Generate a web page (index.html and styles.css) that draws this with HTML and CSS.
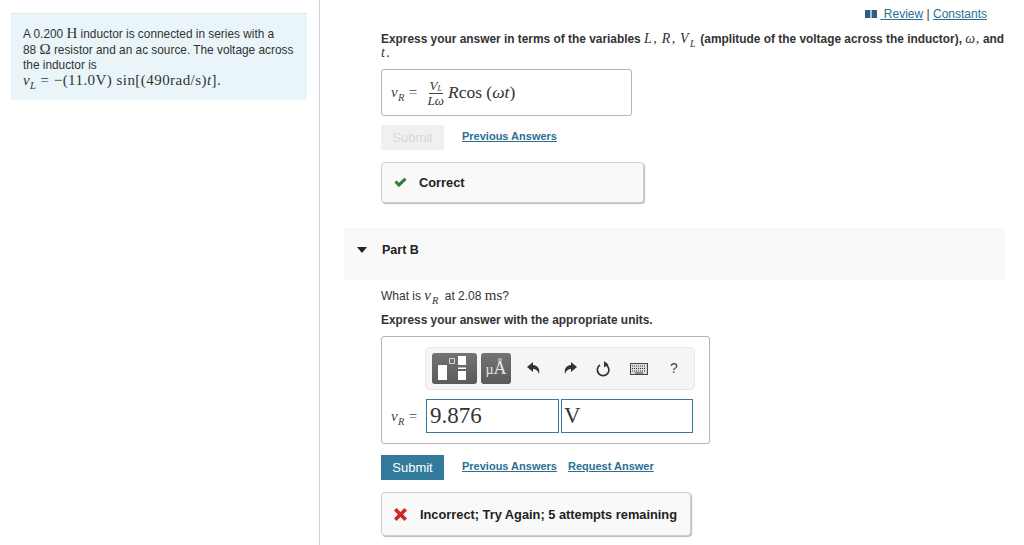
FILE: index.html
```html
<!DOCTYPE html>
<html lang="en">
<head>
  <meta charset="UTF-8" />
  <title>Part B</title>
  <link rel="stylesheet" href="styles.css">
</head>
<body>

  <aside class="sidebar">
    <div class="intro">
      A 0.200 <span class="unit">H</span> inductor is connected in series with a<br>
      88 <span class="unit">Ω</span> resistor and an ac source. The voltage across<br>
      the inductor is
      <div class="formula"><i>v<sub>L</sub></i> = −(11.0V) sin[(490rad/s)<i>t</i>].</div>
    </div>
  </aside>

  <main class="content">
    <div class="toplinks">
      <svg class="book" width="12" height="8" viewBox="0 0 12 8"><path d="M0 0h5.400v8H0zM6.600 0H12v8H6.600z"/></svg>
      <a href="#">&nbsp;Review</a> | <a href="#">Constants</a>
    </div>

    <section class="part">
      <p class="hint">Express your answer in terms of the variables <span class="var">L,</span> <span class="var">R,</span> <span class="var">V<sub>L</sub></span> (amplitude of the voltage across the inductor), <span class="var var-tight">ω,</span> and<br><span class="var">t.</span></p>

      <div class="answer answer-done">
        <span class="lhs"><i>v<sub>R</sub></i> =</span>
        <span class="frac"><span class="num"><i>V<sub>L</sub></i></span><span class="den"><i>Lω</i></span></span>
        <span class="expr"><i>R</i>cos (<i>ωt</i>)</span>
      </div>

      <div class="actions">
        <button class="submit" disabled>Submit</button>
        <a href="#">Previous Answers</a>
      </div>

      <div class="feedback feedback-ok">
        <svg width="13" height="11" viewBox="0 0 14 11"><path d="M0.500 5.500l2.200-2.200 2.600 2.600L11.200 0.300l2.300 2.200-8.200 8z" fill="#2f7d3b"/></svg>
        <span>Correct</span>
      </div>
    </section>

    <header class="part-head">
      <svg width="10" height="6" viewBox="0 0 10 6"><path d="M0 0h10L5 6z" fill="#222"/></svg>
      <span>Part B</span>
    </header>

    <section class="part">
      <p class="question">What is <i class="var">v<sub>R</sub></i> at 2.08 <span class="unit">ms</span>?</p>
      <p class="hint hint-units">Express your answer with the appropriate units.</p>

      <div class="answer answer-open">
        <div class="toolbar">
          <button class="tool-btn tool-wide">
            <svg width="45" height="31" viewBox="0 0 45 31">
              <path d="M6 12h9v15H6z" fill="#fff"/>
              <path d="M17.500 5.500h5v5h-5z" fill="none" stroke="#ddd"/>
              <path d="M26 3h8v9h-8zM26 18h8v9h-8z" fill="#fff"/>
              <path d="M26 14.500h8V16h-8z" fill="#fff"/>
            </svg>
          </button>
          <button class="tool-btn tool-unit"><span class="mu">µ</span>Å</button>
          <div class="tool-icons">
            <svg class="undo" width="14" height="13" viewBox="0 0 14 13"><path d="M6 0L0 5l6 5V7c3 0 5 1.500 6 5 1-5-1-8.500-6-9z" fill="#333"/></svg>
            <svg class="redo" width="14" height="13" viewBox="0 0 14 13"><path d="M8 0l6 5-6 5V7c-3 0-5 1.500-6 5-1-5 1-8.500 6-9z" fill="#333"/></svg>
            <svg width="15" height="16" viewBox="0 0 15 16"><path d="M9.500 3.600A5.800 5.800 0 1 1 4 4" fill="none" stroke="#333" stroke-width="1.700"/><path d="M8 0l4.500 3.500L8 6.500z" fill="#333"/></svg>
            <svg width="18" height="12" viewBox="0 0 18 12"><rect x="0.500" y="0.500" width="17" height="11" fill="#ddd" stroke="#444"/><path d="M2 3h14M2 5.500h14M2 8h14" stroke="#333" stroke-dasharray="1 1"/><path d="M5 10h8" stroke="#333"/></svg>
            <span class="help">?</span>
          </div>
        </div>
        <div class="fields">
          <span class="lhs"><i>v<sub>R</sub></i> =</span>
          <input class="field" value="9.876">
          <input class="field field-unit" value="V">
        </div>
      </div>

      <div class="actions">
        <button class="submit submit-on">Submit</button>
        <a href="#">Previous Answers</a>
        <a href="#">Request Answer</a>
      </div>

      <div class="feedback feedback-bad">
        <svg width="13" height="13" viewBox="0 0 13 13"><path d="M0 2.600L2.600 0l3.900 3.900L10.400 0 13 2.600 9.100 6.500 13 10.400 10.400 13 6.500 9.100 2.600 13 0 10.400 3.900 6.500z" fill="#d0262b"/></svg>
        <span>Incorrect; Try Again; 5 attempts remaining</span>
      </div>
    </section>
  </main>

</body>
</html>
```

FILE: styles.css
```css
* { box-sizing: border-box; }

html, body {
  height: 545px;
  overflow: hidden;
}

body {
  margin: 0;
  display: flex;
  background: #fff;
  color: #333;
  font-family: 'Liberation Sans', Arial, sans-serif;
  font-size: 12px;
  line-height: 15px;
}

a {
  color: #2a6f92;
  text-decoration: underline;
}

sub {
  font-size: 70%;
  line-height: 0;
}

.sidebar {
  width: 320px;
  flex: none;
  padding: 13px 12px 0 11px;
  border-right: 1px solid #c9ced8;
}

.intro {
  height: 87px;
  padding: 12px 0 0 12px;
  background: #e9f5f8;
  border-top: 1px solid #e0e6ea;
  font-size: 11.850px;
  white-space: nowrap;
}

.unit, .formula, .var, .lhs, .expr, .frac {
  font-family: 'Liberation Serif', serif;
}

.unit {
  font-size: 15px;
  line-height: 1;
}

.formula {
  font-size: 15px;
  letter-spacing: 0.45px;
}

.var {
  font-size: 14px;
  font-style: italic;
  font-weight: normal;
  line-height: 1;
  letter-spacing: 1.5px;
}

.var-tight { letter-spacing: 0.5px; }

.content {
  flex: 1;
  min-width: 0;
  padding: 7px 19px 0 24px;
}

.toplinks {
  text-align: right;
  padding-right: 18px;
}

.book { fill: #2a5f7e; }

.part { padding-left: 37px; }

.hint {
  margin: 10px 0 0;
  font-size: 11.900px;
  font-weight: bold;
  line-height: 14px;
  color: #333;
  white-space: nowrap;
}

.answer {
  background: #fff;
  border: 1px solid #b5b5b5;
  border-radius: 3px;
}

.answer-done {
  display: flex;
  align-items: center;
  width: 251px;
  height: 47px;
  margin-top: 9px;
  padding-left: 9px;
}

.lhs {
  font-size: 15px;
  letter-spacing: 0.3px;
  color: #444;
  white-space: nowrap;
}

.frac {
  display: inline-flex;
  flex-direction: column;
  align-items: center;
  margin: 0 4px 0 10px;
  font-size: 13px;
  line-height: 13px;
}

.frac sub {
  font-size: 8px;
  vertical-align: -1px;
}

.num { border-bottom: 1px solid #444; padding: 0 1px 1px; }

.expr {
  font-size: 17.500px;
  color: #333;
}

.actions {
  display: flex;
  align-items: center;
  gap: 11px;
  margin-top: 9px;
  font-weight: bold;
  font-size: 11px;
}

.actions a { margin-bottom: 2px; }

.actions .submit { margin-right: 7px; }

.submit {
  width: 63px;
  height: 25px;
  padding: 0;
  border: none;
  background: #f0f0f0;
  color: #d8d8d8;
  font: 13px 'Liberation Sans', Arial, sans-serif;
}

.submit-on {
  background: #337a9c;
  color: #fff;
}

.feedback {
  display: flex;
  align-items: center;
  height: 41px;
  margin-top: 12px;
  padding-left: 12px;
  gap: 12px;
  background: #f9f9f9;
  border: 1px solid #cfcfcf;
  border-radius: 4px;
  box-shadow: 1px 1px 1px #bbb;
  font-size: 12.800px;
  font-weight: bold;
  color: #222;
}

.feedback-ok { width: 263px; }

.feedback-bad { width: 310px; height: 44px; gap: 13px; }

.part-head {
  display: flex;
  align-items: center;
  gap: 15px;
  height: 52px;
  margin-top: 25px;
  padding: 0 0 8px 13px;
  background: #f9f9f9;
  font-size: 12.500px;
  font-weight: bold;
  color: #222;
}

.question { margin: 8px 0 0; }

.question .var {
  font-size: 15px;
  letter-spacing: 1px;
  margin-right: 2px;
}

.hint-units { margin-top: 9px; }

.answer-open {
  width: 329px;
  height: 108px;
  margin: 9px 0 11px;
  padding: 10px 0 0 9px;
}

.toolbar {
  display: flex;
  align-items: center;
  gap: 4px;
  width: 270px;
  height: 43px;
  margin-left: 34px;
  padding-left: 6px;
  background: #f5f5f5;
  border: 1px solid #e6e6e6;
  border-radius: 5px;
}

.tool-btn {
  height: 31px;
  padding: 0;
  border: none;
  border-radius: 3px;
  background: linear-gradient(#737373, #5a5a5a);
  color: #e8e8e8;
}

.tool-wide { width: 45px; }

.tool-wide svg { display: block; }

.tool-unit {
  width: 30px;
  font: 18px 'Liberation Serif', serif;
}

.mu { font-size: 14px; }

.tool-icons {
  display: flex;
  align-items: center;
  gap: 19px;
  margin-left: 12px;
}

.undo { margin-right: 3px; }

.help { font-size: 14px; color: #444; margin-left: 3px; }

.fields {
  display: flex;
  align-items: center;
  gap: 2px;
  margin-top: 9px;
}

.fields .lhs { width: 33px; }

.field {
  width: 133px;
  height: 34px;
  padding: 0 3px;
  border: 1px solid #337a9c;
  background: #fff;
  color: #333;
  font: 23px 'Liberation Serif', serif;
  outline: none;
}

.field-unit { width: 132px; padding-left: 2px; }
```
